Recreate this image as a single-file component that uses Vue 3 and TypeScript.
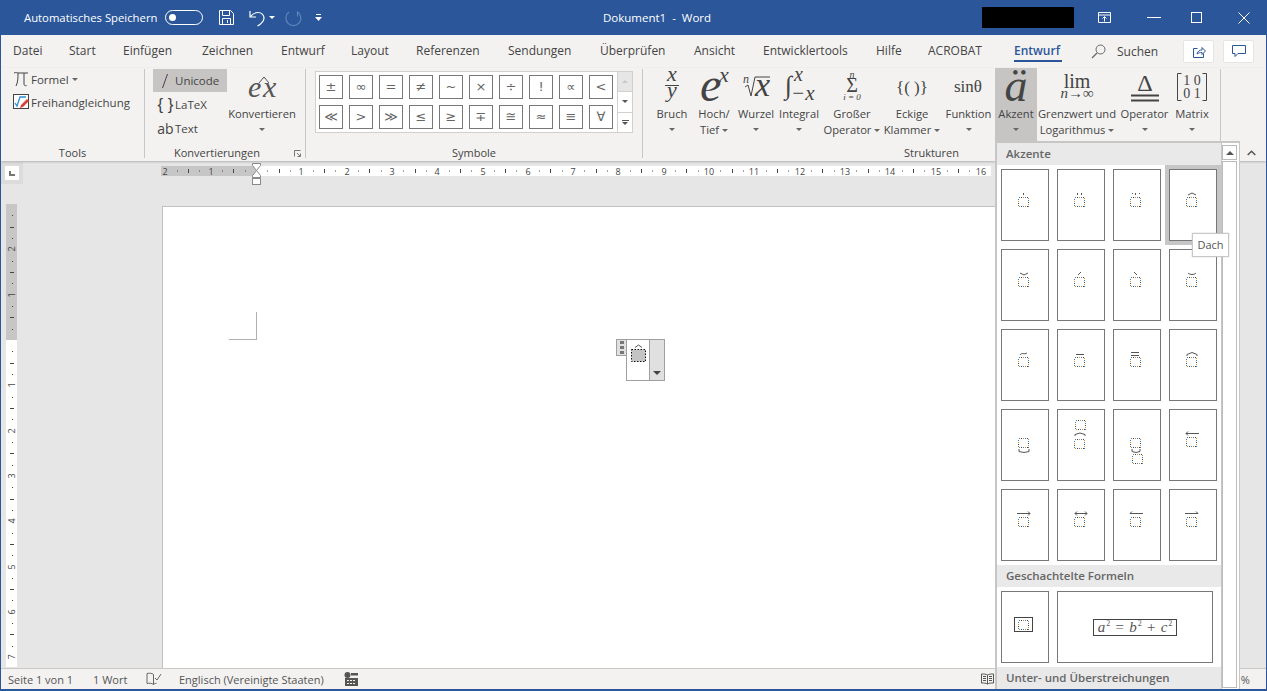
<template>
  <div class="word">
    <svg class="defs" width="0" height="0">
      <symbol id="ph" viewBox="0 0 11 10" width="11" height="10">
        <rect x="0.5" y="0.5" width="10" height="9" fill="none" shape-rendering="crispEdges" stroke="#3d7fbd" stroke-dasharray="1 5" />
        <rect x="0.5" y="0.5" width="10" height="9" fill="none" shape-rendering="crispEdges" stroke="#d98a2b" stroke-dasharray="1 5" stroke-dashoffset="2" />
        <rect x="0.5" y="0.5" width="10" height="9" fill="none" shape-rendering="crispEdges" stroke="#444" stroke-dasharray="1 5" stroke-dashoffset="4" />
      </symbol>
    </svg>

    <header class="titlebar">
      <span class="autosave">Automatisches Speichern</span>
      <span class="toggle"><i></i></span>
      <svg class="qa save" width="17" height="17" viewBox="0 0 17 17" fill="none" stroke="#fff">
        <path d="M1.5 1.5h11l3 3v11h-14zM4.5 1.5v5h7v-5M4.5 15.5v-6h8v6M9.5 11v3" />
      </svg>
      <svg class="qa undo" width="19" height="18" viewBox="0 0 19 18" fill="none" stroke="#fff" stroke-width="1.2">
        <path d="M2 2v6h6M2.3 7.6C5 4.5 7.5 3.500 10 3.500c3.500 0 6 2.500 6 5.500 0 3.500-3 6-6.500 8" />
      </svg>
      <span class="tri white"></span>
      <svg class="qa redo" width="18" height="18" viewBox="0 0 18 18" fill="none" stroke="#5f83bb" stroke-width="1.2">
        <path d="M12 2.500a7.500 7.500 0 1 1-8 .5M12.500 2.500v5" />
      </svg>
      <svg class="qa custom" width="7" height="7" viewBox="0 0 7 7" fill="#fff"><path d="M1 0h5v1H1zM0 3h7L3.500 7z" /></svg>
      <span class="doc-title">Dokument1&nbsp; -&nbsp; Word</span>
      <span class="redacted"></span>
      <svg class="win display" width="14" height="12" viewBox="0 0 14 12" fill="none" stroke="#fff">
        <path d="M.5.500h12v10H.5zM.5 3h12M6.500 9.500V5M4.500 6.500l2-2 2 2" />
      </svg>
      <svg class="win min" width="14" height="1"><path d="M0 .5h14" stroke="#fff" /></svg>
      <svg class="win max" width="11" height="11" fill="none"><rect x=".5" y=".5" width="10" height="10" stroke="#fff" /></svg>
      <svg class="win close" width="12" height="12" fill="none" stroke="#fff"><path d="M.5.500l11 11M11.500.500l-11 11" /></svg>
    </header>

    <nav class="tabs">
      <span
        v-for="t in tabs"
        :key="t.x"
        class="tab"
        :class="{ active: t.active }"
        :style="{ width: t.w + 'px' }"
      >{{ t.label }}</span>
      <svg class="search-ic" width="15" height="15" viewBox="0 0 15 15" fill="none" stroke="#666">
        <circle cx="9.500" cy="5.500" r="4.500" /><path d="M6 9l-5 5" stroke-width="1.3" />
      </svg>
      <span class="search-txt">Suchen</span>
      <span class="top-btn share">
        <svg width="14" height="14" viewBox="0 0 14 14" fill="none" stroke="#2b579a">
          <path d="M5.500 3.500h-4v9h10v-4M5 9c.5-3 3-4 5-4V2.500l3.500 3.500L10 9.500V7.500C8 7.500 6.500 7.800 5 9z" />
        </svg>
      </span>
      <span class="top-btn">
        <svg width="14" height="13" viewBox="0 0 14 13" fill="none" stroke="#2b579a">
          <path d="M.5.500h13v8H6l-3 3v-3H.5z" />
        </svg>
      </span>
    </nav>

    <section class="ribbon">
      <div class="group g-tools">
        <div class="g-body tools">
          <div class="tool-row">
            <svg width="16" height="16" viewBox="0 0 16 16" fill="none" stroke="#444">
              <path d="M1 2c2-1 3 0 5 0h9M5 2c0 5 0 9-2 13M11 2v11c0 1.500 1 2 2.500 1.500" />
            </svg>
            <span>Formel</span><span class="tri small"></span>
          </div>
          <div class="tool-row">
            <svg width="16" height="16" viewBox="0 0 16 16" fill="none">
              <rect x=".5" y=".5" width="15" height="14" stroke="#444" fill="#fff" />
              <path d="M2 9l2 3 3-9h6" stroke="#2e8fd8" stroke-width="1.3" />
              <path d="M7 14l1-3 6-6 2 2-6 6z" fill="#d8433e" />
            </svg>
            <span>Freihandgleichung</span>
          </div>
        </div>
        <div class="g-label">Tools</div>
      </div>

      <div class="group g-conv">
        <div class="g-body conv">
          <div class="conv-list">
            <div class="conv-row selected">
              <svg width="14" height="16" viewBox="0 0 14 16" fill="none" stroke="#444"><path d="M9 1L4 15" /></svg>
              <span>Unicode</span>
            </div>
            <div class="conv-row">
              <span class="conv-ic brace">{ }</span>
              <span>LaTeX</span>
            </div>
            <div class="conv-row">
              <span class="conv-ic ab">ab</span>
              <span>Text</span>
            </div>
          </div>
          <div class="convert">
            <svg width="68" height="38" viewBox="0 0 68 38" fill="#555">
              <text x="20" y="29" font-size="30" font-style="italic" class="serif">e</text>
              <text x="35" y="29" font-size="30" font-style="italic" class="serif">x</text>
              <path d="M31 15l5-6 5 6" fill="none" stroke="#555" />
            </svg>
            <span class="blabel">Konvertieren</span>
            <span class="caret-row"><span class="tri small"></span></span>
          </div>
        </div>
        <div class="g-label conv-label">Konvertierungen</div>
        <svg class="launcher" width="7" height="7" viewBox="0 0 7 7" fill="none" stroke="#777">
          <path d="M.5 6.500V.5h6M3 3l3 3M6.500 3.500v3h-3" />
        </svg>
      </div>

      <div class="group g-sym">
        <div class="g-body">
          <div class="sym-gallery">
            <div class="sym-grid">
              <span v-for="(s, i) in symbols" :key="i" class="sym">{{ s }}</span>
            </div>
            <div class="sym-scroll">
              <span class="sb off"><i class="up"></i></span>
              <span class="sb"><i class="down"></i></span>
              <span class="sb more"><b></b><i class="down"></i></span>
            </div>
          </div>
        </div>
        <div class="g-label">Symbole</div>
      </div>

      <div class="group g-struct">
        <div class="g-body struct">
          <div
            v-for="s in structures"
            :key="s.lines[0]"
            class="sbtn"
            :class="{ selected: s.selected }"
            :style="{ width: s.w + 'px' }"
          >
            <svg class="sicon" :width="s.w" height="38" fill="#444">
              <text
                v-for="(t, i) in s.texts"
                :key="i"
                class="serif"
                :x="t.x"
                :y="t.y"
                :font-size="t.size"
                :font-style="t.italic ? 'italic' : 'normal'"
                :text-anchor="t.anchor || 'start'"
              >{{ t.t }}</text>
              <path v-if="s.path" :d="s.path" fill="none" stroke="#444" :stroke-width="s.sw || 1" />
            </svg>
            <span v-for="(l, i) in s.lines" :key="l" class="blabel">
              {{ l }}<span v-if="s.lines.length === 2 && i === 1" class="tri small inline"></span>
            </span>
            <span v-if="s.lines.length === 1" class="caret-row"><span class="tri small"></span></span>
          </div>
        </div>
        <div class="g-label">Strukturen</div>
      </div>

      <svg class="collapse" width="9" height="6" viewBox="0 0 9 6" fill="none" stroke="#555" stroke-width="1.5">
        <path d="M.7 5l3.800-3.800L8.300 5" />
      </svg>
    </section>

    <main class="workspace">
      <div class="ruler-row">
        <div class="corner"><span><i></i></span></div>
        <svg class="hruler" width="830" height="24" viewBox="0 0 830 24">
          <rect x="0" y="4" width="95" height="10" fill="#c6c6c6" />
          <rect x="95" y="4" width="735" height="10" fill="#fff" />
          <template v-for="m in hMarks" :key="m.k">
            <text v-if="m.label" :x="m.p" y="12.5" class="rnum" text-anchor="middle">{{ m.label }}</text>
            <rect v-else-if="m.long" :x="m.p" y="7" width="1" height="4" fill="#444" />
            <rect v-else :x="m.p" y="8.500" width="1" height="1" fill="#444" />
          </template>
          <path d="M91.500 1.500h8v2l-4 5-4-5zM91.500 15.500v-2l4-5 4 5v2z" fill="#fff" stroke="#8a8a8a" />
          <rect x="91.500" y="16.500" width="8" height="6" fill="#fff" stroke="#8a8a8a" />
        </svg>
      </div>
      <div class="doc-row">
        <div class="vcol">
          <svg width="12" height="463" viewBox="0 0 12 463">
            <rect width="11" height="136" fill="#c6c6c6" />
            <rect y="136" width="11" height="327" fill="#fff" />
            <template v-for="m in vMarks" :key="m.k">
              <text
                v-if="m.label"
                class="rnum"
                text-anchor="middle"
                :transform="`translate(9 ${m.p}) rotate(-90)`"
              >{{ m.label }}</text>
              <rect v-else-if="m.long" x="4" :y="m.p" width="4" height="1" fill="#444" />
              <rect v-else x="6" :y="m.p" width="1" height="1" fill="#444" />
            </template>
          </svg>
        </div>
        <div class="page">
          <div class="crop"></div>
          <div class="eq-box">
            <span class="eq-handle"><i></i><i></i><i></i></span>
            <span class="eq-body">
              <svg width="17" height="20" viewBox="0 0 17 20" fill="none">
                <path d="M5 5.500L8.500 3 12 5.500" stroke="#555" />
                <rect x="1.500" y="7.500" width="14" height="12" fill="#c4c4c4" stroke="#111" stroke-dasharray="1.5 1.5" />
              </svg>
            </span>
            <span class="eq-drop"><i></i></span>
          </div>
        </div>
      </div>
    </main>

    <footer class="status">
      <span class="st-page">Seite 1 von 1</span>
      <span class="st-words">1 Wort</span>
      <svg class="st-check" width="16" height="14" viewBox="0 0 16 14" fill="none" stroke="#666">
        <path d="M7.500 2.500C6 1 3 1 1 1.500v10c2-.5 5-.5 6.500 1V2.500zM7.500 12.500c1-1 2-1.200 3-1.200M9 6l2 2 4-6" />
      </svg>
      <span class="st-lang">Englisch (Vereinigte Staaten)</span>
      <svg class="st-macro" width="14" height="14" viewBox="0 0 14 14" fill="#555">
        <circle cx="3.500" cy="3" r="3" />
        <path d="M7 1h7v2.500H7zM1 6h13v8H1zM3 8v1h2V8zm3 0v1h2V8zm3 0v1h2V8zm-6 3v1h2v-1zm3 0v1h2v-1zm3 0v1h2v-1z" fill-rule="evenodd" />
      </svg>
      <svg class="st-read" width="13" height="12" viewBox="0 0 13 12" fill="none" stroke="#555">
        <path d="M6.500 2C5 1 3 1 .5 1v9c2.500 0 4.500 0 6 1 1.500-1 3.500-1 6-1V1c-2.500 0-4.500 0-6 1zM6.500 2v9M2 3.500h3M2 5.500h3M2 7.500h3M8 3.500h3M8 5.500h3M8 7.500h3" />
      </svg>
      <span class="st-zoom">100 %</span>
    </footer>

    <aside class="flyout">
      <div class="fly-main">
        <div class="fly-head">Akzente</div>
        <div class="fly-grid">
          <div v-for="c in accents" :key="c.id" class="cell" :class="{ hot: c.id === 'hat' }">
            <svg width="46" height="70" viewBox="0 0 46 70" fill="none" stroke="#555">
              <use href="#ph" :x="c.bx ?? 16" :y="c.by ?? 27" />
              <use v-if="c.ex !== undefined" href="#ph" :x="c.ex" :y="c.ey" />
              <path :d="c.d" />
            </svg>
          </div>
        </div>
        <div class="fly-head">Geschachtelte Formeln</div>
        <div class="fly-grid">
          <div class="cell">
            <svg width="46" height="70" viewBox="0 0 46 70" fill="none">
              <rect x="12.500" y="25.500" width="18" height="14" stroke="#444" />
              <use href="#ph" x="16" y="28" />
            </svg>
          </div>
          <div class="cell wide"><span class="formula"><i>a</i><sup>2</sup> = <i>b</i><sup>2</sup> + <i>c</i><sup>2</sup></span></div>
        </div>
        <div class="fly-head">Unter- und Überstreichungen</div>
      </div>
      <div class="fly-scroll">
        <span class="fs-up"><i></i></span>
        <span class="fs-thumb"></span>
      </div>
      <div class="tooltip">Dach</div>
    </aside>
  </div>
</template>

<script setup lang="ts">
interface MathText {
  t: string
  x: number
  y: number
  size: number
  italic?: boolean
  anchor?: string
}

interface Structure {
  lines: string[]
  w: number
  texts: MathText[]
  path?: string
  sw?: number
  selected?: boolean
}

interface Accent {
  id: string
  d: string
  bx?: number
  by?: number
  ex?: number
  ey?: number
}

const tabs = [
  { label: 'Datei', x: 13, w: 56 },
  { label: 'Start', x: 69, w: 54 },
  { label: 'Einfügen', x: 123, w: 79 },
  { label: 'Zeichnen', x: 202, w: 79 },
  { label: 'Entwurf', x: 281, w: 70 },
  { label: 'Layout', x: 351, w: 65 },
  { label: 'Referenzen', x: 416, w: 92 },
  { label: 'Sendungen', x: 508, w: 92 },
  { label: 'Überprüfen', x: 600, w: 94 },
  { label: 'Ansicht', x: 694, w: 69 },
  { label: 'Entwicklertools', x: 763, w: 113 },
  { label: 'Hilfe', x: 876, w: 52 },
  { label: 'ACROBAT', x: 928, w: 86 },
  { label: 'Entwurf', x: 1014, w: 48, active: true },
]

const symbols = ['±', '∞', '=', '≠', '~', '×', '÷', '!', '∝', '<', '≪', '>', '≫', '≤', '≥', '∓', '≅', '≈', '≡', '∀']

const structures: Structure[] = [
  {
    lines: ['Bruch'],
    w: 40,
    texts: [
      { t: 'x', x: 20, y: 13, size: 22, italic: true, anchor: 'middle' },
      { t: 'y', x: 20, y: 29, size: 22, italic: true, anchor: 'middle' },
    ],
    path: 'M13 17.500h14',
  },
  {
    lines: ['Hoch/', 'Tief'],
    w: 44,
    texts: [
      { t: 'e', x: 8, y: 33, size: 48, italic: true },
      { t: 'x', x: 27, y: 14, size: 22, italic: true },
    ],
  },
  {
    lines: ['Wurzel'],
    w: 40,
    texts: [
      { t: 'n', x: 7, y: 15, size: 12, italic: true },
      { t: 'x', x: 19, y: 28, size: 34, italic: true },
    ],
    path: 'M9 19l3-2 3 11 4-19h15',
  },
  {
    lines: ['Integral'],
    w: 46,
    texts: [
      { t: '∫', x: 9, y: 26, size: 26, italic: true },
      { t: 'x', x: 18, y: 13, size: 20, italic: true },
      { t: '−x', x: 15, y: 32, size: 21, italic: true },
    ],
  },
  {
    lines: ['Großer', 'Operator'],
    w: 60,
    texts: [
      { t: 'n', x: 30, y: 10, size: 10, italic: true, anchor: 'middle' },
      { t: 'Σ', x: 30, y: 24, size: 20, anchor: 'middle' },
      { t: 'i = 0', x: 30, y: 32, size: 9, italic: true, anchor: 'middle' },
    ],
  },
  {
    lines: ['Eckige', 'Klammer'],
    w: 60,
    texts: [{ t: '{( )}', x: 30, y: 25, size: 17, anchor: 'middle' }],
  },
  {
    lines: ['Funktion'],
    w: 53,
    texts: [{ t: 'sinθ', x: 26, y: 24, size: 17, anchor: 'middle' }],
  },
  {
    lines: ['Akzent'],
    w: 42,
    selected: true,
    texts: [{ t: 'ä', x: 21, y: 33, size: 46, italic: true, anchor: 'middle' }],
  },
  {
    lines: ['Grenzwert und', 'Logarithmus'],
    w: 80,
    texts: [
      { t: 'lim', x: 40, y: 20, size: 20, anchor: 'middle' },
      { t: 'n→∞', x: 40, y: 30, size: 15, italic: true, anchor: 'middle' },
    ],
  },
  {
    lines: ['Operator'],
    w: 55,
    texts: [{ t: 'Δ', x: 28, y: 23, size: 24, anchor: 'middle' }],
    path: 'M14 27.500h28M14 32.500h28',
    sw: 2,
  },
  {
    lines: ['Matrix'],
    w: 40,
    texts: [
      { t: '1 0', x: 20, y: 17, size: 14, anchor: 'middle' },
      { t: '0 1', x: 20, y: 30, size: 14, anchor: 'middle' },
    ],
    path: 'M9.500 5.500h-4v27h4M30.500 5.500h4v27h-4',
  },
]

const accents: Accent[] = [
  { id: 'dot', d: 'M21.500 23v2' },
  { id: 'ddot', d: 'M19.500 23v2M23.500 23v2' },
  { id: 'tdot', d: 'M18 23.500h1M21.500 23v2M25 23.500h1' },
  { id: 'hat', d: 'M18 25l4-2 4 2' },
  { id: 'check', d: 'M18 23l4 2 4-2' },
  { id: 'acute', d: 'M20 25l3-3' },
  { id: 'grave', d: 'M20 22l3 3' },
  { id: 'breve', d: 'M18 23c2 2 6 2 8 0' },
  { id: 'tilde', d: 'M18 25c2-3 4 0 7-2' },
  { id: 'bar', d: 'M18 24.500h8' },
  { id: 'dbar', d: 'M17 22.500h8M17 25.500h8' },
  { id: 'arch', d: 'M17 26v-1.500l5-2 5 2V26' },
  { id: 'under', bx: 16, by: 28, d: 'M17 39v2.500l5 1 5-1V39' },
  { id: 'over', bx: 16, by: 29, ex: 17, ey: 10, d: 'M17 26v-1.500l5-1.500 5 1.500V26' },
  { id: 'under2', bx: 16, by: 28, ex: 18, ey: 44, d: 'M18 39v2.500l4 1 4-1V39' },
  { id: 'larr', d: 'M29 23.500H16M18 21.500l-2 2 2 2' },
  { id: 'rarr', d: 'M15 23.500h13M26 21.500l2 2-2 2' },
  { id: 'lrarr', d: 'M17 23.500h12M19 21.500l-2 2 2 2M27 21.500l2 2-2 2' },
  { id: 'lharp', d: 'M16 23.500h13M18 21.500l-2 2' },
  { id: 'rharp', d: 'M15 23.500h13M26 21.500l2 2' },
]

const PITCH = 45.3

function marks(from: number, to: number, origin: number) {
  const out: { k: number; p: number; label: string; long: boolean }[] = []
  for (let k = from; k <= to; k++) {
    if (k === 0) continue
    const major = k % 4 === 0
    out.push({
      k,
      p: Math.round(origin + (k * PITCH) / 4),
      label: major ? String(Math.abs(k) / 4) : '',
      long: k % 2 === 0,
    })
  }
  return out
}

const hMarks = marks(-8, 64, 95)
const vMarks = marks(-11, 28, 136)
</script>

<style scoped>
.word {
  position: relative;
  width: 1267px;
  height: 691px;
  overflow: hidden;
  box-sizing: border-box;
  display: flex;
  flex-direction: column;
  background: #f3f2f1;
  border: 1px solid #2b579a;
  border-top: 0;
  border-bottom-width: 2px;
  font-family: "Open Sans", "Noto Sans", sans-serif;
  font-size: 11.5px;
  color: #444;
}
.defs {
  position: absolute;
}
.serif {
  font-family: "Liberation Serif", serif;
}
.titlebar {
  flex: 0 0 35px;
  margin: 0 -1px;
  display: flex;
  align-items: center;
  background: #2b579a;
  color: #fff;
}
.autosave {
  width: 141px;
  margin-left: 24px;
  font-size: 11.3px;
  white-space: nowrap;
}
.toggle {
  box-sizing: border-box;
  width: 38px;
  height: 15px;
  border: 1px solid #fff;
  border-radius: 8px;
  padding: 3px;
  display: flex;
}
.toggle i {
  width: 7px;
  height: 7px;
  border-radius: 50%;
  background: #fff;
}
.save {
  margin-left: 15px;
}
.undo {
  margin-left: 13px;
}
.tri {
  display: inline-block;
  width: 0;
  height: 0;
  border: 3px solid transparent;
  border-top: 3px solid #555;
  border-bottom: 0;
}
.tri.white {
  border-top-color: #fff;
  margin-left: 2px;
}
.tri.small {
  border-width: 3px 3px 0;
  border-top-color: #666;
  border-bottom: 0;
}
.tri.inline {
  margin-left: 3px;
  vertical-align: 2px;
}
.redo {
  margin-left: 10px;
}
.custom {
  margin-left: 12px;
}
.doc-title {
  width: 379px;
  margin-left: 281px;
  white-space: nowrap;
}
.redacted {
  width: 92px;
  height: 21px;
  background: #000;
}
.display {
  margin-left: 24px;
}
.min {
  margin-left: 35px;
}
.max {
  margin-left: 30px;
}
.close {
  margin-left: 36px;
}
.tabs {
  flex: 0 0 33px;
  display: flex;
  align-items: center;
  padding-left: 12px;
  font-size: 12px;
}
.tab {
  white-space: nowrap;
  position: relative;
  height: 33px;
  line-height: 31px;
}
.tab.active {
  color: #2b579a;
  font-weight: 600;
}
.tab.active::after {
  content: "";
  position: absolute;
  left: 0;
  right: 0;
  bottom: 6px;
  height: 2px;
  background: #2b579a;
}
.search-ic {
  margin-left: 29px;
}
.search-txt {
  margin-left: 11px;
  width: 66px;
}
.top-btn {
  box-sizing: border-box;
  width: 31px;
  height: 23px;
  margin-right: 9px;
  background: #fff;
  border: 1px solid #e6e5e4;
  border-radius: 2px;
  display: flex;
  align-items: center;
  justify-content: center;
}
.ribbon {
  position: relative;
  flex: 0 0 93px;
  display: flex;
  box-shadow: 0 1px 2px rgba(0, 0, 0, 0.22);
  z-index: 1;
}
.group {
  position: relative;
  box-sizing: border-box;
  display: flex;
  flex-direction: column;
  height: 89px;
  margin-top: 1px;
  border-right: 1px solid #c8c6c4;
}
.g-body {
  flex: 1;
  min-height: 0;
}
.g-label {
  height: 16px;
  line-height: 21px;
  text-align: center;
  font-size: 11px;
  color: #444;
}
.conv-label {
  padding-right: 16px;
}
.g-tools {
  width: 144px;
}
.tools {
  padding: 2px 0 0 12px;
}
.tool-row {
  display: flex;
  align-items: center;
  gap: 2px;
  height: 16px;
  margin-bottom: 7px;
  white-space: nowrap;
}
.tool-row .tri {
  margin-left: 1px;
}
.g-conv {
  width: 161px;
}
.conv {
  display: flex;
  padding-left: 8px;
}
.conv-list {
  width: 74px;
}
.conv-row {
  height: 23px;
  margin-bottom: 1px;
  display: flex;
  align-items: center;
  gap: 1px;
  padding-left: 4px;
  white-space: nowrap;
}
.conv-row svg,
.conv-ic {
  width: 17px;
  flex: none;
  text-align: center;
}
.conv-ic.brace {
  font-size: 17px;
  line-height: 20px;
  font-family: "Liberation Sans", sans-serif;
  white-space: nowrap;
}
.conv-ic.ab {
  font-size: 14px;
}
.selected {
  background: #c6c5c4;
}
.convert {
  width: 70px;
  display: flex;
  flex-direction: column;
  align-items: center;
}
.convert svg {
  margin-top: -1px;
  flex: none;
}
.blabel {
  height: 16px;
  line-height: 16px;
  font-size: 11.2px;
  white-space: nowrap;
}
.caret-row {
  height: 14px;
  display: flex;
  align-items: center;
  justify-content: center;
}
.launcher {
  position: absolute;
  right: 4px;
  bottom: 1px;
}
.g-sym {
  width: 337px;
}
.g-sym .g-body {
  padding: 2px 0 0 9px;
}
.sym-gallery {
  box-sizing: border-box;
  width: 318px;
  height: 62px;
  display: flex;
  background: #fff;
  border: 1px solid #d2d0ce;
}
.sym-grid {
  width: 301px;
  display: grid;
  grid-template-columns: repeat(10, 24px);
  grid-auto-rows: 24px;
  gap: 6px;
  padding: 3px 0 0 3px;
  box-sizing: border-box;
}
.sym {
  box-sizing: border-box;
  border: 1px solid #777;
  background: #fff;
  text-align: center;
  line-height: 22px;
  font-family: "DejaVu Sans", sans-serif;
  font-size: 13px;
  color: #666;
}
.sym-scroll {
  flex: 1;
  display: flex;
  flex-direction: column;
}
.sb {
  flex: 1;
  position: relative;
  border-left: 1px solid #d2d0ce;
  border-bottom: 1px solid #d2d0ce;
  display: flex;
  align-items: center;
  justify-content: center;
  flex-direction: column;
  gap: 1px;
}
.sb:last-child {
  border-bottom: 0;
}
.sb.off {
  background: #e6e6e6;
}
.sb b {
  width: 7px;
  height: 1px;
  background: #555;
}
.sb i {
  width: 0;
  height: 0;
  border: 3px solid transparent;
}
.sb i.up {
  border-top: 0;
  border-bottom: 3px solid #c8c8c8;
}
.sb i.down {
  border-bottom: 0;
  border-top: 3px solid #555;
}
.g-struct {
  width: 578px;
}
.struct {
  display: flex;
  padding-left: 9px;
}
.sbtn {
  flex: none;
  height: 73px;
  margin-top: -1px;
  display: flex;
  flex-direction: column;
  align-items: center;
  text-align: center;
}
.sicon {
  flex: none;
  overflow: visible;
}
.collapse {
  margin: 82px 0 0 26px;
}
.workspace {
  position: relative;
  flex: 1;
  min-height: 0;
  background: #e6e6e6;
  overflow: hidden;
}
.ruler-row {
  height: 43px;
  display: flex;
  align-items: flex-start;
}
.corner {
  box-sizing: border-box;
  width: 22px;
  height: 22px;
  margin-top: 1px;
  background: #dcdcdc;
  padding: 4px;
}
.corner span {
  display: block;
  width: 14px;
  height: 14px;
  background: #fff;
  position: relative;
}
.corner i {
  position: absolute;
  left: 4px;
  top: 5px;
  width: 6px;
  height: 5px;
  border-left: 2px solid #777;
  border-bottom: 2px solid #777;
  box-sizing: border-box;
}
.hruler {
  margin-left: 138px;
  margin-top: 1px;
}
.rnum {
  font-family: "Open Sans", sans-serif;
  font-size: 9px;
  fill: #444;
}
.doc-row {
  display: flex;
  height: 463px;
}
.vcol {
  width: 156px;
  padding-left: 5px;
  flex: none;
}
.page {
  position: relative;
  box-sizing: border-box;
  width: 1000px;
  height: 500px;
  margin-top: 2px;
  padding: 105px 0 0 66px;
  background: #fff;
  border: 1px solid #c0c0c0;
  border-width: 1px 1px 0;
}
.crop {
  width: 27px;
  height: 27px;
  border-right: 1px solid #b0b0b0;
  border-bottom: 1px solid #b0b0b0;
}
.eq-box {
  position: absolute;
  left: 453px;
  top: 132px;
  display: flex;
  height: 42px;
}
.eq-handle {
  box-sizing: border-box;
  width: 10px;
  height: 17px;
  background: #e0e0e0;
  border: 1px solid #a0a0a0;
  border-right: 0;
  display: flex;
  flex-direction: column;
  align-items: center;
  justify-content: center;
  gap: 2px;
}
.eq-handle i {
  width: 4px;
  height: 3px;
  background: #777;
}
.eq-body {
  box-sizing: border-box;
  width: 23px;
  border: 1px solid #a0a0a0;
  border-right: 0;
  padding: 2px 0 0 3px;
  background: #fff;
}
.eq-drop {
  box-sizing: border-box;
  width: 16px;
  background: #e0e0e0;
  border: 1px solid #a0a0a0;
  display: flex;
  align-items: flex-end;
  justify-content: center;
  padding-bottom: 5px;
}
.eq-drop i {
  width: 0;
  height: 0;
  border: 4px solid transparent;
  border-top: 4px solid #444;
  border-bottom: 0;
}
.status {
  flex: 0 0 21px;
  display: flex;
  align-items: center;
  border-top: 1px solid #c8c8c8;
  box-sizing: border-box;
  font-size: 11px;
  color: #555;
  z-index: 1;
}
.st-page {
  margin-left: 7px;
  width: 85px;
}
.st-words {
  width: 53px;
}
.st-check {
  flex: none;
}
.st-lang {
  margin-left: 17px;
  width: 165px;
  white-space: nowrap;
}
.st-macro {
  flex: none;
}
.st-read {
  flex: none;
  margin-left: 623px;
}
.st-zoom {
  margin-left: 225px;
  white-space: nowrap;
}
.flyout {
  position: absolute;
  left: 994px;
  top: 141px;
  box-sizing: border-box;
  width: 245px;
  height: 550px;
  display: flex;
  background: #fff;
  border: 2px solid #c6c6c6;
  border-bottom: 0;
  border-right-width: 1px;
  z-index: 3;
  overflow: hidden;
}
.fly-main {
  width: 224px;
  flex: none;
  border-right: 1px solid #c6c6c6;
  box-sizing: content-box;
}
.fly-head {
  height: 22px;
  line-height: 21px;
  padding-left: 9px;
  background: #e9e9e9;
  font-weight: 600;
  font-size: 11.5px;
  color: #666;
}
.fly-grid {
  display: grid;
  grid-template-columns: repeat(4, 48px);
  grid-auto-rows: 72px;
  gap: 8px;
  padding: 4px;
}
.cell {
  box-sizing: border-box;
  border: 1px solid #777;
  background: #fff;
}
.cell.hot {
  box-shadow: 0 0 0 4px #c6c6c6;
}
.cell.wide {
  grid-column: span 3;
  width: 156px;
  display: flex;
  align-items: center;
  justify-content: center;
}
.formula {
  box-sizing: border-box;
  width: 84px;
  height: 17px;
  line-height: 15px;
  border: 1px solid #444;
  text-align: center;
  font-family: "Liberation Serif", serif;
  font-size: 15px;
  word-spacing: 1.5px;
  color: #555;
  white-space: nowrap;
}
.formula sup {
  font-size: 8px;
  line-height: 0;
  margin-left: 1px;
}
.fly-scroll {
  width: 15px;
  padding-top: 2px;
  display: flex;
  flex-direction: column;
}
.fs-up {
  box-sizing: border-box;
  height: 15px;
  border: 1px solid #bbb;
  display: flex;
  align-items: center;
  justify-content: center;
}
.fs-up i {
  width: 0;
  height: 0;
  border: 4px solid transparent;
  border-top: 0;
  border-bottom: 4px solid #555;
}
.fs-thumb {
  box-sizing: border-box;
  height: 527px;
  border: 1px solid #bbb;
  margin-top: 1px;
}
.tooltip {
  position: absolute;
  left: 195px;
  top: 90px;
  box-sizing: border-box;
  width: 37px;
  height: 24px;
  line-height: 21px;
  text-align: center;
  background: #fff;
  border: 1px solid #c8c8c8;
  box-shadow: 0 0 1px #aaa;
  font-size: 11px;
  color: #555;
}
</style>

<style>
body {
  margin: 0;
}
</style>
